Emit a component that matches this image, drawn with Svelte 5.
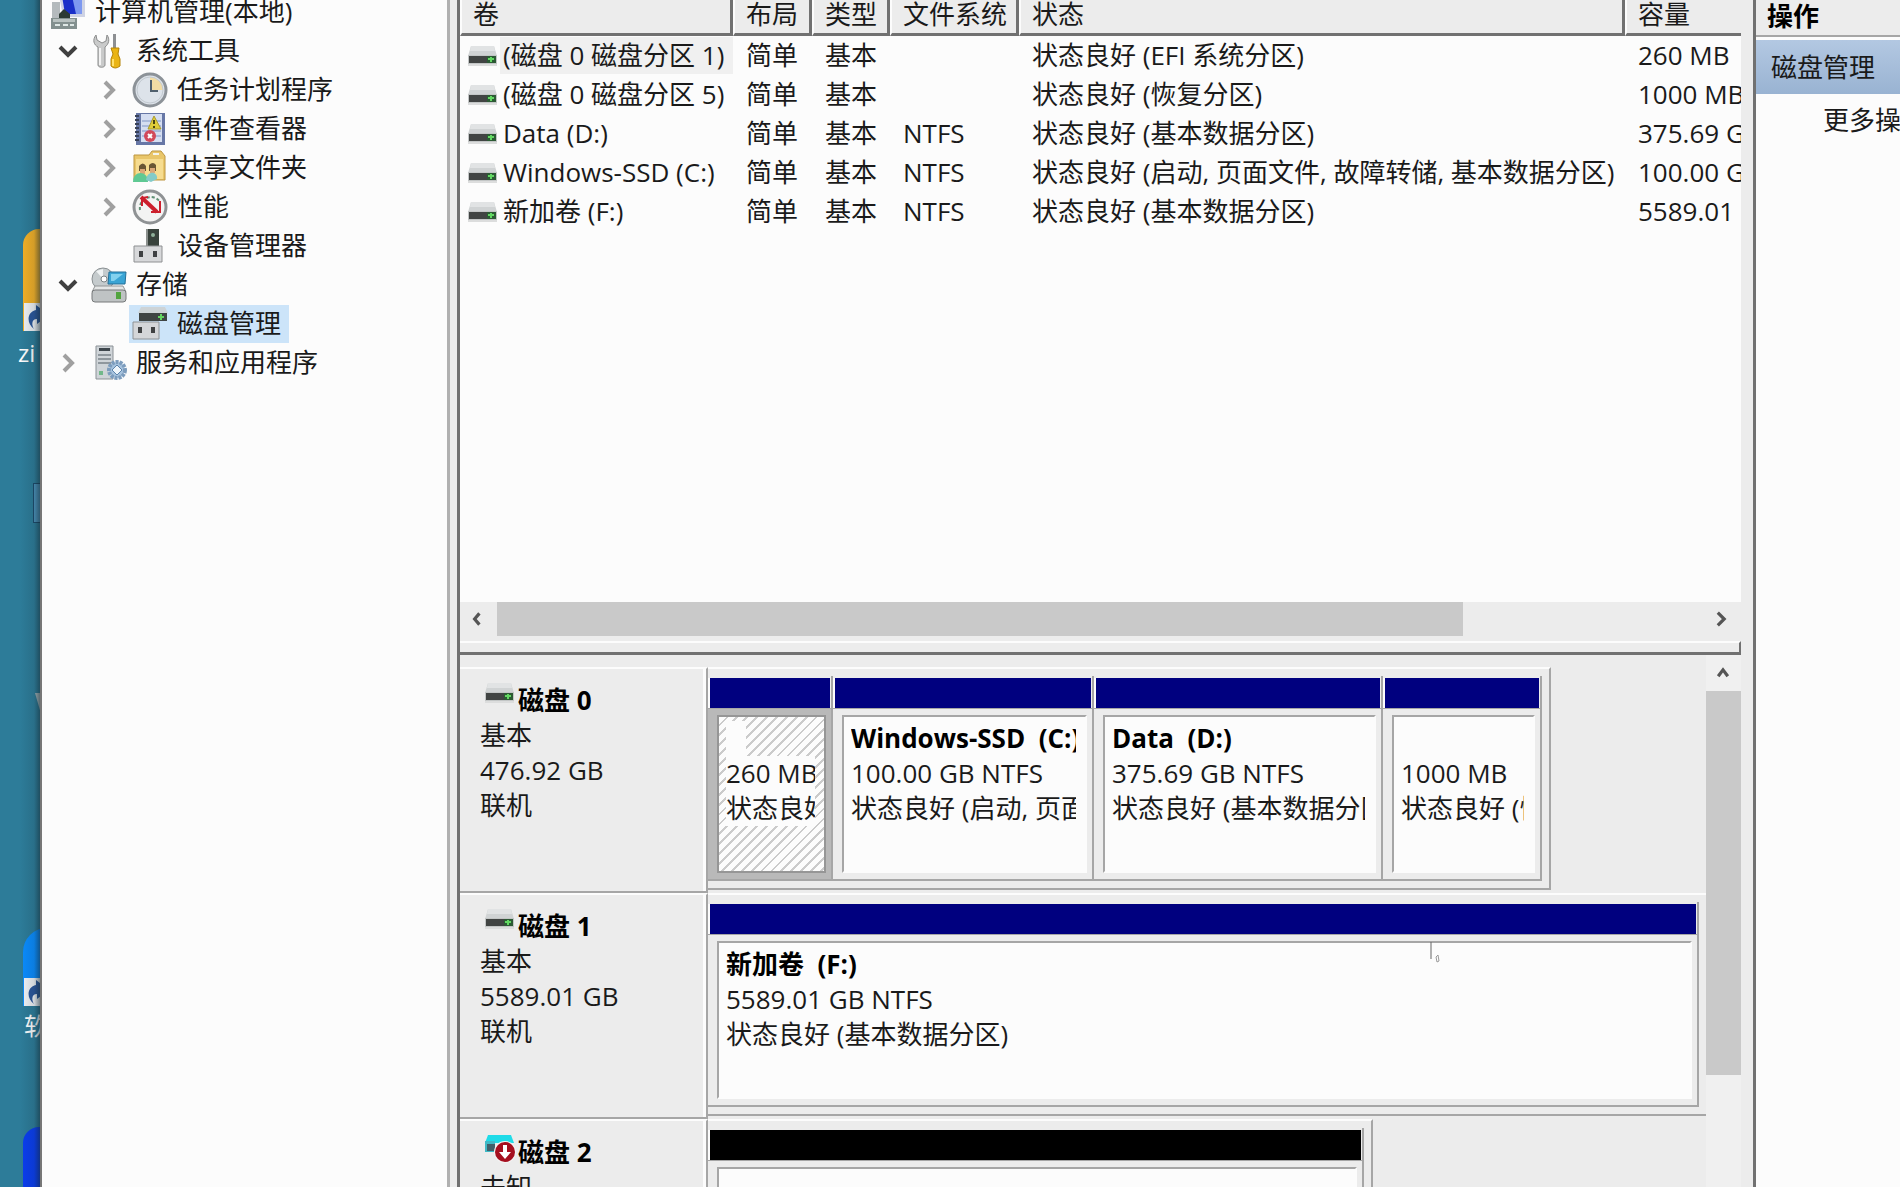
<script>
	const tree = [
		{ label: '计算机管理(本地)', depth: 0, icon: 'computer' },
		{ label: '系统工具', depth: 1, icon: 'tools', state: 'open' },
		{ label: '任务计划程序', depth: 2, icon: 'clock', state: 'closed' },
		{ label: '事件查看器', depth: 2, icon: 'events', state: 'closed' },
		{ label: '共享文件夹', depth: 2, icon: 'shared', state: 'closed' },
		{ label: '性能', depth: 2, icon: 'performance', state: 'closed' },
		{ label: '设备管理器', depth: 2, icon: 'devices' },
		{ label: '存储', depth: 1, icon: 'storage', state: 'open' },
		{ label: '磁盘管理', depth: 2, icon: 'disks', selected: true },
		{ label: '服务和应用程序', depth: 1, icon: 'services', state: 'closed' }
	];

	const columns = ['卷', '布局', '类型', '文件系统', '状态', '容量'];

	const volumes = [
		{ name: '(磁盘 0 磁盘分区 1)', fs: '', status: '状态良好 (EFI 系统分区)', size: '260 MB', focused: true },
		{ name: '(磁盘 0 磁盘分区 5)', fs: '', status: '状态良好 (恢复分区)', size: '1000 MB' },
		{ name: 'Data (D:)', fs: 'NTFS', status: '状态良好 (基本数据分区)', size: '375.69 GB' },
		{ name: 'Windows-SSD (C:)', fs: 'NTFS', status: '状态良好 (启动, 页面文件, 故障转储, 基本数据分区)', size: '100.00 GB' },
		{ name: '新加卷 (F:)', fs: 'NTFS', status: '状态良好 (基本数据分区)', size: '5589.01 GB' }
	];

	const disks = [
		{
			name: '磁盘 0',
			info: ['基本', '476.92 GB', '联机'],
			parts: [
				{ name: '   ', size: '260 MB', status: '状态良好 (EFI 系统分区)', width: 125, selected: true },
				{ name: 'Windows-SSD  (C:)', size: '100.00 GB NTFS', status: '状态良好 (启动, 页面文件, 故障转储, 基本数据分区)', width: 261 },
				{ name: 'Data  (D:)', size: '375.69 GB NTFS', status: '状态良好 (基本数据分区)', width: 289 },
				{ name: '   ', size: '1000 MB', status: '状态良好 (恢复分区)', width: 159 }
			]
		},
		{
			name: '磁盘 1',
			info: ['基本', '5589.01 GB', '联机'],
			wide: true,
			parts: [{ name: '新加卷  (F:)', size: '5589.01 GB NTFS', status: '状态良好 (基本数据分区)' }]
		},
		{
			name: '磁盘 2',
			info: ['未知'],
			missing: true,
			parts: [{ name: '', size: '', status: '', width: 656, unallocated: true }]
		}
	];
</script>

{#snippet chevron(dir)}
	<svg class="chevron {dir}" viewBox="0 0 20 20" aria-hidden="true">
		{#if dir === 'down'}
			<path d="M2 6l8 8 8-8" />
		{:else if dir === 'right'}
			<path d="M6 2l8 8-8 8" />
		{:else if dir === 'left'}
			<path d="M13 3l-6 7 6 7" />
		{:else}
			<path d="M4 14l6-8 6 8" />
		{/if}
	</svg>
{/snippet}

{#snippet drive()}
	<svg class="drive" viewBox="0 0 29 20" aria-hidden="true">
		<path d="M3 0h23l3 10H0z" fill="#d0d3d4" />
		<path d="M3 0h23l1 5H2z" fill="#e1e3e4" />
		<path d="M0 9h29v9H0z" fill="#c3c6c6" />
		<path d="M1 10h27v7H1z" fill="#414443" />
		<path d="M0 18h29v2H0z" fill="#dcdddd" />
		<path d="M19 10h9v7h-9z" fill="#2c5a34" />
		<path d="M23 11v5M20 13h6" stroke="#62d862" stroke-width="2" />
	</svg>
{/snippet}

{#snippet missingDrive()}
	<svg class="missing" viewBox="0 0 31 28" aria-hidden="true">
		<path d="M3 0h23l3 8H0z" fill="#1fdbe8" />
		<path d="M0 6h10v11H0z" fill="#3fb9c6" />
		<path d="M2 9h8v7H2z" fill="#41606a" />
		<circle cx="20" cy="17" r="11" fill="#f4f4f4" />
		<circle cx="20" cy="17" r="10" fill="#a50f1f" />
		<path d="M18 10h4v7h4l-6 7-6-7h4z" fill="#fff" />
	</svg>
{/snippet}

{#snippet treeIcon(name)}
	<svg class="tree-icon" viewBox="0 0 36 36" aria-hidden="true">
		{#if name === 'computer'}
			<path d="M9 1h26v22H13z" fill="#cfd3e4" />
			<path d="M12 2h20v18H15z" fill="#1a2fc9" />
			<path d="M22 2h10v18H26z" fill="#7d98f0" />
			<path d="M2 8h8v16H2z" fill="#b4babd" />
			<path d="M9 20l5-5 6 5v4H9z" fill="#2c3a35" />
			<path d="M1 24h26v11H1z" fill="#83908f" />
			<path d="M3 25h22v3H3z" fill="#b9c2c1" />
			<path d="M5 30h5v2H5zM13 30h5v2h-5zM20 30h4v2h-4z" fill="#dfe8e6" />
		{:else if name === 'tools'}
			<path d="M5 2C1 7 3 12 7 14v18c0 3 7 3 7 0V14c4-3 5-8 2-12l-1 6-4 2-5-3z" fill="#c9caca" stroke="#8b8c8c" />
			<path d="M9 15v17" stroke="#f2f2f2" stroke-width="2" />
			<path d="M22 1h3v14h-3z" fill="#8d8f92" />
			<path d="M20 15h8l-1 6 2 5v7q-5 4-9 0v-7l2-5z" fill="#eab413" stroke="#b48409" />
			<path d="M22 26v7" stroke="#ffe06a" stroke-width="2" />
		{:else if name === 'clock'}
			<circle cx="18" cy="18" r="16" fill="#dde3ea" stroke="#8c9298" stroke-width="3" />
			<path d="M18 18V5a13 13 0 0 1 13 13z" fill="#f2dca4" />
			<circle cx="18" cy="18" r="13" fill="none" stroke="#c2c9d0" />
			<path d="M19 8v11h7" fill="none" stroke="#50606e" stroke-width="2" />
		{:else if name === 'events'}
			<path d="M4 2h29v32H4z" fill="#6777a6" />
			<path d="M9 3h21v28H9z" fill="#d5def1" />
			<path d="M10 10h19M10 15h19M10 20h19M10 25h19" stroke="#7f94c5" />
			<path d="M3 5h4M3 9h4M3 13h4M3 17h4M3 21h4M3 25h4M3 29h4" stroke="#3a4258" stroke-width="2" />
			<path d="M22 5l7 13H16z" fill="#e0cd3a" stroke="#a89a30" />
			<path d="M22 9v4M22 15v2" stroke="#4a4510" stroke-width="2" />
			<circle cx="18" cy="25" r="6" fill="#d2495a" />
			<path d="M16 23l4 4M20 23l-4 4" stroke="#fff" stroke-width="2" />
		{:else if name === 'shared'}
			<path d="M2 5h15l3-4h9l4 5v24H2z" fill="#e9c66a" stroke="#bd9640" />
			<path d="M4 9h27v20H4z" fill="#f6dc90" />
			<path d="M21 4h6" stroke="#f4f4ec" stroke-width="2" />
			<path d="M7 16q4-5 7 0v5H7zM17 15q4-4 7 0v6h-7z" fill="#6a5634" />
			<path d="M8 19h5v5H8zM18 18h5v5h-5z" fill="#dba878" />
			<path d="M1 32c0-12 15-12 15 0z" fill="#5fc993" />
			<path d="M14 30c1-10 12-9 11-1l-6 3z" fill="#83cbc9" />
		{:else if name === 'performance'}
			<circle cx="18" cy="18" r="16" fill="#f3f3f3" stroke="#8f9294" stroke-width="3" />
			<path d="M8 21a11 11 0 0 1 20-8" fill="none" stroke="#5f8f74" stroke-width="2" stroke-dasharray="3 2" />
			<path d="M9 8l16 15" stroke="#cc1f2d" stroke-width="4" />
			<path d="M10 17V9l6-1M28 12v11h-9" fill="none" stroke="#cc1f2d" stroke-width="2" />
		{:else if name === 'devices'}
			<path d="M15 1h12v19H15z" fill="#38423c" />
			<path d="M14 1h2v19h-2z" fill="#8b908d" />
			<circle cx="21" cy="7" r="2" fill="#8fb09a" />
			<path d="M2 18h28v16H2z" fill="#d7d8da" stroke="#8e9092" />
			<path d="M7 23h4v6H7zM21 23h4v6h-4z" fill="#3f4143" />
		{:else if name === 'storage'}
			<circle cx="12" cy="12" r="11" fill="#c5cbcd" stroke="#8a9093" />
			<path d="M12 12L5 4l7-2z" fill="#f0f3f4" />
			<circle cx="13" cy="12" r="3" fill="#fff" stroke="#7c8487" />
			<path d="M18 5h17l-1 12H17z" fill="#3aa4d4" stroke="#246f97" />
			<path d="M20 7h12l-9 7h-3z" fill="#83d1ee" />
			<path d="M4 19h28l3 6H1z" fill="#e4e6e6" stroke="#929596" />
			<rect x="1" y="23" width="34" height="12" rx="3" fill="#bfc3c4" stroke="#76797a" />
			<path d="M25 25h5v7h-5z" fill="#52a43f" />
		{:else if name === 'disks'}
			<path d="M9 1h24l3 6H6z" fill="#cdd3d6" />
			<path d="M7 7h28v8H7z" fill="#3f4443" />
			<path d="M29 8v6M26 11h6" stroke="#64d35f" stroke-width="2" />
			<path d="M1 16h26v17H1z" fill="#d4d6d9" stroke="#8d9296" />
			<path d="M6 21h4v6H6zM19 21h4v6h-4z" fill="#3f4143" />
		{:else}
			<path d="M5 1h17v33H5z" fill="#cfd4d8" stroke="#8b9196" />
			<path d="M8 3h11v3H8z" fill="#3f474d" />
			<path d="M7 10h13M7 14h13M7 18h13" stroke="#8f979d" stroke-width="2" />
			<path d="M8 26h4v4H8z" fill="#72b88a" />
			<circle cx="26" cy="25" r="8" fill="#a7c3de" stroke="#7c9cbd" stroke-width="4" stroke-dasharray="3 1" />
			<path d="M26 20l5 5-5 5-5-5z" fill="#eef5fb" stroke="#5d84ac" />
		{/if}
	</svg>
{/snippet}

{#snippet shortcut()}
	<svg class="shortcut" viewBox="0 0 28 28" aria-hidden="true">
		<path d="M0 0h28v28H0z" fill="#f2f4f7" />
		<path d="M10 26C2 20 3 9 12 7V2l13 10-12 9v-5c-5 0-6 5-3 10z" fill="#2a569c" />
	</svg>
{/snippet}

<div class="screen">
	<aside class="desktop" aria-label="桌面">
		<div class="shortcut-icon amber">{@render shortcut()}</div>
		<span class="caption zi">zi</span>
		<div class="frame"></div>
		<svg class="glint" viewBox="0 0 8 28" aria-hidden="true">
			<path d="M1 0h7v24z" fill="#a9b9bd" />
		</svg>
		<div class="shortcut-icon azure">{@render shortcut()}</div>
		<span class="caption soft">软</span>
		<div class="shortcut-icon royal"></div>
	</aside>

	<nav class="tree-pane" aria-label="控制台树">
		<ul class="tree">
			{#each tree as node}
				<li class="node depth-{node.depth}">
					{#if node.state}
						<button class="twisty" class:open={node.state === 'open'} aria-label={node.label} aria-expanded={node.state === 'open'}>
							{@render chevron(node.state === 'open' ? 'down' : 'right')}
						</button>
					{:else if node.depth > 0}
						<span class="twisty"></span>
					{/if}
					<button class="node-label" class:selected={node.selected}>
						{@render treeIcon(node.icon)}
						{node.label}
					</button>
				</li>
			{/each}
		</ul>
	</nav>

	<main class="center">
		<section class="volume-list">
			<div class="table-wrap">
				<table>
					<colgroup>
						<col class="c-name" />
						<col class="c-layout" />
						<col class="c-type" />
						<col class="c-fs" />
						<col class="c-status" />
						<col class="c-size" />
					</colgroup>
					<thead>
						<tr>
							{#each columns as column}
								<th scope="col">{column}</th>
							{/each}
						</tr>
					</thead>
					<tbody>
						{#each volumes as v}
							<tr>
								<td class="name-cell">
									<div class="name">
										{@render drive()}
										<span class="name-text" class:focused={v.focused}>{v.name}</span>
									</div>
								</td>
								<td>简单</td>
								<td>基本</td>
								<td>{v.fs}</td>
								<td>{v.status}</td>
								<td>{v.size}</td>
							</tr>
						{/each}
					</tbody>
				</table>
			</div>
			<div class="hscroll">
				<button class="arrow" aria-label="向左滚动">{@render chevron('left')}</button>
				<div class="htrack"><div class="hthumb"></div></div>
				<button class="arrow" aria-label="向右滚动">{@render chevron('right')}</button>
			</div>
			<div class="splitter"></div>
		</section>

		<section class="disk-view">
			<div class="disks">
				{#each disks as disk}
					<div class="disk">
						<div class="disk-label">
							<div class="disk-name">
								{#if disk.missing}{@render missingDrive()}{:else}{@render drive()}{/if}
								<strong>{disk.name}</strong>
							</div>
							{#each disk.info as line}
								<div>{line}</div>
							{/each}
						</div>
						<div class="parts" class:wide={disk.wide}>
							{#each disk.parts as part}
								<div
									class="part"
									class:selected={part.selected}
									class:unallocated={part.unallocated}
									style:width={part.width ? `${part.width}px` : null}
								>
									<div class="bar"></div>
									<div class="part-body">
										<div class="part-text">
											<div><strong>{part.name}</strong></div>
											<div><span>{part.size}</span></div>
											<div><span>{part.status}</span></div>
										</div>
									</div>
								</div>
							{/each}
						</div>
					</div>
				{/each}
				<svg class="cursor" viewBox="0 0 12 22" aria-hidden="true">
					<path d="M1 0v17" stroke="#666" />
					<path d="M6 15l2-2 1 6-2 1z" fill="#fff" stroke="#999" />
				</svg>
			</div>
			<div class="vscroll">
				<button class="arrow" aria-label="向上滚动">{@render chevron('up')}</button>
				<div class="vthumb"></div>
			</div>
		</section>
	</main>

	<aside class="actions">
		<h2>操作</h2>
		<button class="action-group">磁盘管理</button>
		<button class="action">更多操作</button>
	</aside>
</div>

<style>
	:global(body) {
		margin: 0;
		overflow: hidden;
	}

	.screen {
		--face: #ececec;
		--paper: #fcfcfc;
		--dark: #717171;
		--mid: #a6a6a6;
		display: flex;
		height: 100vh;
		overflow: hidden;
		background: var(--face);
		color: #1a1a1a;
		font-family: 'Open Sans', 'Noto Sans CJK SC', sans-serif;
		font-size: 26px;
		line-height: 35px;
		white-space: nowrap;
	}

	button {
		margin: 0;
		padding: 0;
		border: 0;
		background: none;
		color: inherit;
		font: inherit;
		text-align: left;
	}

	strong {
		color: #000;
		font-weight: 700;
		white-space: pre;
	}

	/* desktop strip behind the window */
	.desktop {
		position: relative;
		flex: 0 0 40px;
		overflow: hidden;
		background: #2d7c99;
	}

	.desktop::after {
		content: '';
		position: absolute;
		inset: 0;
		background: linear-gradient(to right, transparent 50%, rgba(20, 40, 50, 0.15) 85%, rgba(20, 40, 50, 0.55));
	}

	.shortcut-icon {
		position: absolute;
		left: 23px;
		width: 100px;
		border-radius: 16px 0 0 0;
	}

	.amber { top: 229px; height: 102px; background: #f5b126; }
	.azure { top: 928px; height: 78px; background: #0a8cff; border-radius: 24px 0 0 0; }
	.royal { top: 1127px; height: 100px; background: #0a3df0; }

	.shortcut {
		position: absolute;
		left: 1px;
		bottom: 0;
		width: 28px;
		height: 28px;
	}

	.caption {
		position: absolute;
		color: #fff;
		font-size: 24px;
	}

	.zi { left: 18px; top: 335px; }
	.soft { left: 24px; top: 1008px; }

	.frame {
		position: absolute;
		left: 33px;
		top: 483px;
		width: 20px;
		height: 38px;
		border: 1px solid #1c4a6b;
		background: #4c93bb;
	}

	.glint {
		position: absolute;
		left: 34px;
		top: 693px;
		width: 8px;
		height: 28px;
	}

	/* tree */
	.tree-pane {
		flex: 0 0 405px;
		overflow: hidden;
		border-left: 2px solid #777;
		border-right: 3px solid #b0b0b0;
		background: var(--paper);
	}

	.tree {
		margin: -8px 0 0;
		padding: 0;
		list-style: none;
	}

	.node {
		display: flex;
		align-items: center;
		height: 39px;
	}

	.depth-0 { padding-left: 5px; }
	.depth-1 { padding-left: 12px; }
	.depth-2 { padding-left: 53px; }

	.twisty {
		display: flex;
		justify-content: center;
		width: 28px;
		margin-right: 6px;
		color: #a0a0a0;
	}

	.twisty.open { color: #404040; }

	.chevron {
		width: 20px;
		height: 20px;
		fill: none;
		stroke: currentColor;
		stroke-width: 4;
	}

	.node-label {
		display: flex;
		align-items: center;
		gap: 9px;
		height: 38px;
		padding: 0 8px 0 3px;
	}

	.node-label.selected { background: #cce4f9; }

	.tree-icon { width: 36px; height: 36px; }

	/* volume list */
	.center {
		display: flex;
		flex: 1;
		flex-direction: column;
		min-width: 0;
		margin-left: 7px;
		border-left: 3px solid var(--dark);
	}

	.volume-list {
		display: flex;
		flex: 1;
		flex-direction: column;
		min-height: 0;
	}

	.table-wrap {
		flex: 1;
		overflow: hidden;
		background: var(--paper);
	}

	table {
		table-layout: fixed;
		width: 1365px;
		border-collapse: separate;
		border-spacing: 0;
	}

	.c-name { width: 273px; }
	.c-layout { width: 79px; }
	.c-type { width: 78px; }
	.c-fs { width: 129px; }
	.c-status { width: 606px; }
	.c-size { width: 200px; }

	th {
		height: 36px;
		padding: 0 0 0 11px;
		border-left: 2px solid var(--paper);
		border-right: 3px solid var(--dark);
		border-bottom: 3px solid var(--dark);
		background: var(--face);
		font-weight: 400;
		line-height: 29px;
		text-align: left;
		vertical-align: top;
		box-sizing: border-box;
	}

	td {
		height: 39px;
		padding: 0 0 0 13px;
		overflow: hidden;
	}

	.name-cell { padding: 0; }

	.name {
		display: flex;
		align-items: center;
		gap: 3px;
		padding-left: 8px;
	}

	.drive { flex: none; width: 29px; height: 20px; }

	.name-text {
		flex: 1;
		padding-left: 3px;
		line-height: 37px;
	}

	.focused { background: #f0f0f0; }

	.arrow {
		display: flex;
		align-items: center;
		justify-content: center;
		color: #555;
	}

	.hscroll {
		display: flex;
		height: 34px;
		padding-bottom: 5px;
	}

	.hscroll .arrow { width: 37px; padding-right: 3px; }
	.hscroll .chevron, .vscroll .chevron { width: 16px; height: 16px; }
	.htrack { flex: 1; }

	.hthumb {
		width: 80%;
		height: 34px;
		background: #c9c9c9;
	}

	.splitter {
		height: 9px;
		border-top: 2px solid var(--paper);
		border-right: 2px solid var(--dark);
		border-bottom: 3px solid var(--dark);
	}

	/* disk view */
	.disk-view {
		display: flex;
		height: 532px;
		overflow: hidden;
	}

	.disks {
		position: relative;
		flex: 1;
		min-width: 0;
		padding-top: 12px;
	}

	.disk {
		display: flex;
		align-items: flex-start;
		height: 226px;
	}

	.disk-label {
		flex: 0 0 248px;
		box-sizing: border-box;
		height: 226px;
		padding: 14px 0 0 20px;
		border-top: 2px solid var(--paper);
		border-right: 2px solid var(--mid);
		border-bottom: 2px solid var(--mid);
		box-shadow: inset -3px 0 var(--paper);
	}

	.disk-name {
		display: flex;
		align-items: flex-start;
		gap: 4px;
		padding-left: 5px;
	}

	.missing { flex: none; width: 31px; height: 28px; margin-right: -2px; }

	.parts {
		display: flex;
		box-sizing: border-box;
		height: 223px;
		padding: 7px 7px 7px 0;
		border-top: 2px solid var(--paper);
		border-right: 2px solid var(--mid);
		border-bottom: 2px solid var(--mid);
	}

	.parts.wide {
		flex: 1;
		border-right: 0;
	}

	.wide .part { flex: 1; }

	.part {
		display: flex;
		flex-direction: column;
		box-sizing: border-box;
		border-right: 2px solid var(--mid);
		border-bottom: 2px solid var(--mid);
	}

	.bar {
		height: 31px;
		margin: 2px 1px 0 0;
		border-left: 2px solid var(--paper);
		background: #00007f;
	}

	.unallocated .bar { background: #000; }

	.part-body {
		flex: 1;
		min-width: 0;
		padding: 6px 5px 6px 9px;
		border-top: 1px solid var(--mid);
	}

	.part-text {
		box-sizing: border-box;
		height: 158px;
		padding: 4px 9px 0 7px;
		border: 2px solid var(--mid);
		border-right-color: var(--paper);
		border-bottom-color: var(--paper);
		background: var(--paper);
	}

	.part-text div {
		height: 35px;
		overflow: hidden;
	}

	.selected .part-body { background: #b9b9b9; }

	.selected .part-text {
		border-color: #969696;
		background: repeating-linear-gradient(135deg, #fcfcfc 0 5px, #cbcbcb 5px 7px);
	}

	.selected .part-text strong,
	.selected .part-text span { background: var(--paper); }

	.cursor {
		position: absolute;
		left: 970px;
		top: 287px;
		width: 12px;
		height: 22px;
	}

	.vscroll {
		width: 35px;
		background: #f0f0f0;
	}

	.vscroll .arrow { width: 33px; height: 36px; }

	.vthumb {
		height: 384px;
		background: #c9c9c9;
	}

	/* actions */
	.actions {
		flex: 0 0 144px;
		overflow: hidden;
		margin-left: 12px;
		border-left: 3px solid var(--dark);
		background: var(--paper);
	}

	h2 {
		height: 35px;
		margin: 0 0 3px;
		padding-left: 11px;
		border-bottom: 2px solid var(--mid);
		background: var(--face);
		color: #000;
		font-size: 26px;
		line-height: 32px;
	}

	.action-group {
		display: block;
		width: 100%;
		height: 54px;
		padding-left: 15px;
		background: linear-gradient(#b3c8e2, #99b3d2);
	}

	.action {
		display: block;
		height: 52px;
		padding-left: 67px;
	}
</style>
